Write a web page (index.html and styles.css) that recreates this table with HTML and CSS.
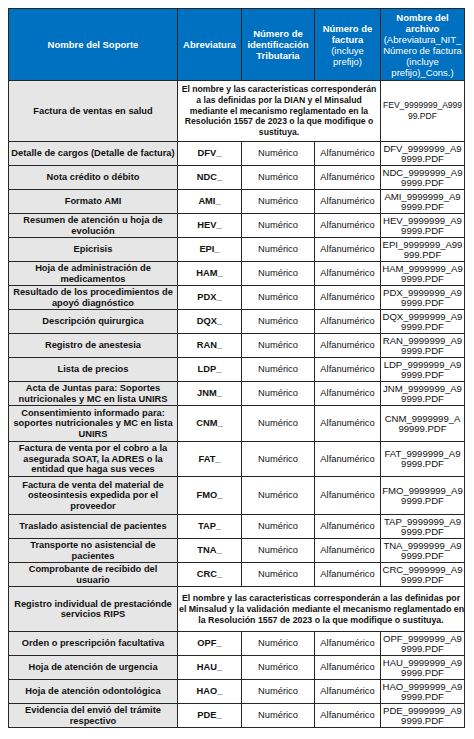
FILE: index.html
```html
<!DOCTYPE html>
<html lang="es">
<head>
<meta charset="utf-8">
<title>Soportes</title>
<link rel="stylesheet" href="styles.css">
</head>
<body>
<table class="grid">
  <colgroup>
    <col class="c1"><col class="c2"><col class="c3"><col class="c4"><col class="c5">
  </colgroup>
  <thead>
    <tr class="h-head">
      <th>Nombre del Soporte</th>
      <th>Abreviatura</th>
      <th>Número de<br>identificación<br>Tributaria</th>
      <th>Número de<br>factura<br><span class="light">(incluye<br>prefijo)</span></th>
      <th>Nombre del<br>archivo<br><span class="light">(Abreviatura_NIT_<br>Número de factura<br>(incluye<br>prefijo)_Cons.)</span></th>
    </tr>
  </thead>
  <tbody>
    <tr class="h-fev">
      <td class="name">Factura de ventas en salud</td>
      <td class="note" colspan="3">El nombre y las caracteristicas corresponderán<br>a las definidas por la DIAN y el Minsalud<br>mediante el mecanismo reglamentado en la<br>Resolución 1557 de 2023 o la que modifique o<br>sustituya.</td>
      <td class="file small">FEV_9999999_A999<br>99.PDF</td>
    </tr>
    <tr class="h2">
      <td class="name">Detalle de cargos (Detalle de factura)</td>
      <td class="abbr">DFV_</td><td>Numérico</td><td>Alfanumérico</td>
      <td class="file">DFV_9999999_A9<br>9999.PDF</td>
    </tr>
    <tr class="h2">
      <td class="name">Nota crédito o débito</td>
      <td class="abbr">NDC_</td><td>Numérico</td><td>Alfanumérico</td>
      <td class="file">NDC_9999999_A9<br>9999.PDF</td>
    </tr>
    <tr class="h2">
      <td class="name">Formato AMI</td>
      <td class="abbr">AMI_</td><td>Numérico</td><td>Alfanumérico</td>
      <td class="file">AMI_9999999_A9<br>9999.PDF</td>
    </tr>
    <tr class="h2">
      <td class="name">Resumen de atención u hoja de<br>evolución</td>
      <td class="abbr">HEV_</td><td>Numérico</td><td>Alfanumérico</td>
      <td class="file">HEV_9999999_A9<br>9999.PDF</td>
    </tr>
    <tr class="h2">
      <td class="name">Epicrisis</td>
      <td class="abbr">EPI_</td><td>Numérico</td><td>Alfanumérico</td>
      <td class="file">EPI_9999999_A99<br>999.PDF</td>
    </tr>
    <tr class="h2">
      <td class="name">Hoja de administración de<br>medicamentos</td>
      <td class="abbr">HAM_</td><td>Numérico</td><td>Alfanumérico</td>
      <td class="file">HAM_9999999_A9<br>9999.PDF</td>
    </tr>
    <tr class="h2">
      <td class="name">Resultado de los procedimientos de<br>apoyó diagnóstico</td>
      <td class="abbr">PDX_</td><td>Numérico</td><td>Alfanumérico</td>
      <td class="file">PDX_9999999_A9<br>9999.PDF</td>
    </tr>
    <tr class="h2">
      <td class="name">Descripción quirurgica</td>
      <td class="abbr">DQX_</td><td>Numérico</td><td>Alfanumérico</td>
      <td class="file">DQX_9999999_A9<br>9999.PDF</td>
    </tr>
    <tr class="h2">
      <td class="name">Registro de anestesia</td>
      <td class="abbr">RAN_</td><td>Numérico</td><td>Alfanumérico</td>
      <td class="file">RAN_9999999_A9<br>9999.PDF</td>
    </tr>
    <tr class="h2">
      <td class="name">Lista de precios</td>
      <td class="abbr">LDP_</td><td>Numérico</td><td>Alfanumérico</td>
      <td class="file">LDP_9999999_A9<br>9999.PDF</td>
    </tr>
    <tr class="h2">
      <td class="name">Acta de Juntas para: Soportes<br>nutricionales y MC en lista UNIRS</td>
      <td class="abbr">JNM_</td><td>Numérico</td><td>Alfanumérico</td>
      <td class="file">JNM_9999999_A9<br>9999.PDF</td>
    </tr>
    <tr class="h-cnm">
      <td class="name">Consentimiento informado para:<br>soportes nutricionales y MC en lista<br>UNIRS</td>
      <td class="abbr">CNM_</td><td>Numérico</td><td>Alfanumérico</td>
      <td class="file">CNM_9999999_A<br>99999.PDF</td>
    </tr>
    <tr class="h-fat">
      <td class="name">Factura de venta por el cobro a la<br>asegurada SOAT, la ADRES o la<br>entidad que haga sus veces</td>
      <td class="abbr">FAT_</td><td>Numérico</td><td>Alfanumérico</td>
      <td class="file">FAT_9999999_A9<br>9999.PDF</td>
    </tr>
    <tr class="h-fmo">
      <td class="name">Factura de venta del material de<br>osteosintesis expedida por el<br>proveedor</td>
      <td class="abbr">FMO_</td><td>Numérico</td><td>Alfanumérico</td>
      <td class="file">FMO_9999999_A9<br>9999.PDF</td>
    </tr>
    <tr class="h2">
      <td class="name">Traslado asistencial de pacientes</td>
      <td class="abbr">TAP_</td><td>Numérico</td><td>Alfanumérico</td>
      <td class="file">TAP_9999999_A9<br>9999.PDF</td>
    </tr>
    <tr class="h2">
      <td class="name">Transporte no asistencial de<br>pacientes</td>
      <td class="abbr">TNA_</td><td>Numérico</td><td>Alfanumérico</td>
      <td class="file">TNA_9999999_A9<br>9999.PDF</td>
    </tr>
    <tr class="h2">
      <td class="name">Comprobante de recibido del<br>usuario</td>
      <td class="abbr">CRC_</td><td>Numérico</td><td>Alfanumérico</td>
      <td class="file">CRC_9999999_A9<br>9999.PDF</td>
    </tr>
    <tr class="h-rips">
      <td class="name">Registro individual de prestaciónde<br>servicios RIPS</td>
      <td class="note wide" colspan="4">El nombre y las caracteristicas corresponderán a las definidas por<br>el Minsalud y la validación mediante el mecanismo reglamentado en<br>la Resolución 1557 de 2023 o la que modifique o sustituya.</td>
    </tr>
    <tr class="h2">
      <td class="name">Orden o prescripción facultativa</td>
      <td class="abbr">OPF_</td><td>Numérico</td><td>Alfanumérico</td>
      <td class="file">OPF_9999999_A9<br>9999.PDF</td>
    </tr>
    <tr class="h2">
      <td class="name">Hoja de atención de urgencia</td>
      <td class="abbr">HAU_</td><td>Numérico</td><td>Alfanumérico</td>
      <td class="file">HAU_9999999_A9<br>9999.PDF</td>
    </tr>
    <tr class="h2">
      <td class="name">Hoja de atención odontológica</td>
      <td class="abbr">HAO_</td><td>Numérico</td><td>Alfanumérico</td>
      <td class="file">HAO_9999999_A9<br>9999.PDF</td>
    </tr>
    <tr class="h2">
      <td class="name">Evidencia del envió del trámite<br>respectivo</td>
      <td class="abbr">PDE_</td><td>Numérico</td><td>Alfanumérico</td>
      <td class="file">PDE_9999999_A9<br>9999.PDF</td>
    </tr>
  </tbody>
</table>
</body>
</html>
```

FILE: styles.css
```css
body {
  margin: 8px;
  background: #ffffff;
  color: #000000;
  font-family: "Liberation Sans", Arial, sans-serif;
}

.grid {
  border-collapse: collapse;
  table-layout: fixed;
  width: 456px;
}

.c1 { width: 169px; }
.c2 { width: 64px; }
.c3 { width: 73px; }
.c4 { width: 66px; }
.c5 { width: 84px; }

.grid th,
.grid td {
  border: 1px solid #262626;
  padding: 0 1px;
  text-align: center;
  vertical-align: middle;
  font-size: 9.3px;
  line-height: 10.5px;
  overflow: hidden;
  white-space: nowrap;
  color: #111111;
}

.grid thead th {
  background: #0070c0;
  color: #ffffff;
  font-weight: bold;
  font-size: 9.5px;
  line-height: 11px;
}

.light {
  font-weight: normal;
}

.grid td.name {
  background: #e7e6e6;
  font-weight: bold;
}

.grid td.abbr {
  font-weight: bold;
}

.grid td.note {
  font-weight: bold;
  font-size: 8.65px;
  line-height: 10.7px;
}

.grid td.note.wide {
  font-size: 8.8px;
  line-height: 11px;
}

.grid td.file {
  font-size: 9.6px;
  line-height: 10px;
  padding: 0;
  letter-spacing: -0.05px;
}

.grid td.file.small {
  font-size: 8.6px;
  line-height: 11px;
}

.h-head { height: 72px; }
.h-fev { height: 61px; }
.h2 { height: 24px; }
.h-cnm { height: 36px; }
.h-fat { height: 35px; }
.h-fmo { height: 38px; }
.h-rips { height: 45px; }
```
